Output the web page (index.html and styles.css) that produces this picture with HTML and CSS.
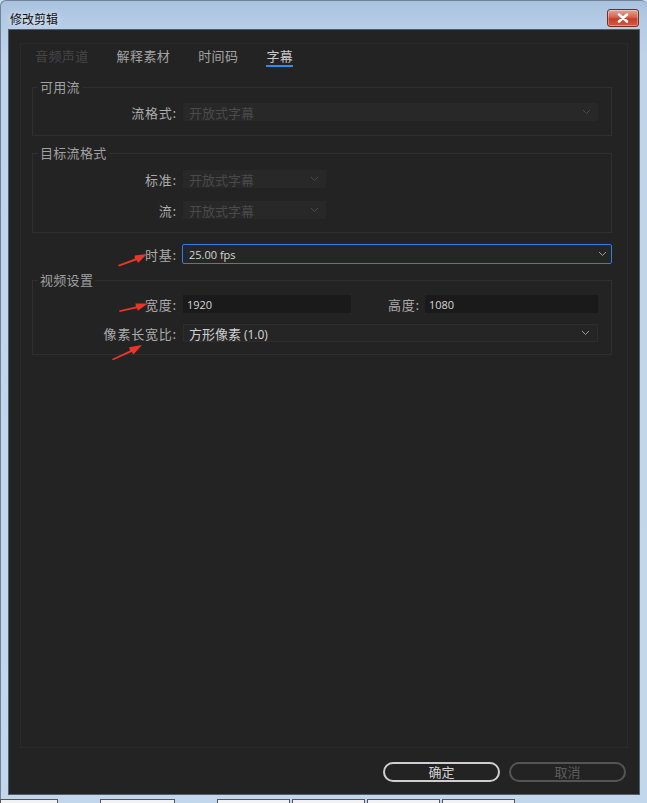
FILE: index.html
```html
<!DOCTYPE html>
<html lang="zh">
<head>
<meta charset="utf-8">
<title>修改剪辑</title>
<link rel="stylesheet" href="styles.css">
</head>
<body>
<div class="window">
  <div class="titlebar">
    <span class="title">修改剪辑</span>
    <span class="close"><svg width="14" height="10" viewBox="0 0 14 10"><path d="M3 1.5l8 7M11 1.5l-8 7" stroke="#fff" stroke-width="2.6" stroke-linecap="round"/></svg></span>
  </div>
  <div class="client">
    <div class="panel">
      <div class="tabs">
        <span class="tab disabled">音频声道</span>
        <span class="tab">解释素材</span>
        <span class="tab">时间码</span>
        <span class="tab active">字幕</span>
      </div>

      <fieldset class="group g1">
        <legend>可用流</legend>
        <div class="row">
          <label class="lbl">流格式:</label>
          <div class="select disabled wide"><span>开放式字幕</span><svg class="chev" width="9" height="6" viewBox="0 0 9 6"><path d="M1 1l3.5 3.5L8 1" fill="none" stroke="#4a4a4a"/></svg></div>
        </div>
      </fieldset>

      <fieldset class="group g2">
        <legend>目标流格式</legend>
        <div class="row">
          <label class="lbl">标准:</label>
          <div class="select disabled short"><span>开放式字幕</span><svg class="chev" width="9" height="6" viewBox="0 0 9 6"><path d="M1 1l3.5 3.5L8 1" fill="none" stroke="#4a4a4a"/></svg></div>
        </div>
        <div class="row gap13">
          <label class="lbl">流:</label>
          <div class="select disabled short"><span>开放式字幕</span><svg class="chev" width="9" height="6" viewBox="0 0 9 6"><path d="M1 1l3.5 3.5L8 1" fill="none" stroke="#4a4a4a"/></svg></div>
        </div>
      </fieldset>

      <div class="row timebase">
        <label class="lbl lbl-wide">时基:</label>
        <div class="select focus"><span class="latin">25.00 fps</span><svg class="chev" width="9" height="6" viewBox="0 0 9 6"><path d="M1 1l3.5 3.5L8 1" fill="none" stroke="#9a9a9a"/></svg></div>
      </div>

      <fieldset class="group g3">
        <legend>视频设置</legend>
        <div class="row">
          <label class="lbl">宽度:</label>
          <div class="input w1"><span class="latin">1920</span></div>
          <label class="lbl2">高度:</label>
          <div class="input w2"><span class="latin">1080</span></div>
        </div>
        <div class="row gap11">
          <label class="lbl">像素长宽比:</label>
          <div class="select plain wide"><span>方形像素 <span class="latin big">(1.0)</span></span><svg class="chev" width="9" height="6" viewBox="0 0 9 6"><path d="M1 1l3.5 3.5L8 1" fill="none" stroke="#9a9a9a"/></svg></div>
        </div>
      </fieldset>
    </div>

    <div class="footer">
      <button class="btn ok">确定</button>
      <button class="btn cancel">取消</button>
    </div>

    <svg class="arrow a1" width="32" height="16" viewBox="0 0 32 16"><polygon points="1,13 18,6.6 17.5,3.4 30,2 21,11 19.7,8.2 2,14.5" fill="#e8362a"/></svg>
    <svg class="arrow a2" width="32" height="12" viewBox="0 0 32 12"><polygon points="1,9.5 18,5.6 17.4,2.4 30,2.5 19.8,9.8 19,7.2 1.6,11" fill="#e8362a"/></svg>
    <svg class="arrow a3" width="34" height="18" viewBox="0 0 34 18"><polygon points="1,16 19,7.4 18,4.2 31,2 22.4,11.6 20.7,8.9 2,17.2" fill="#e8362a"/></svg>
  </div>
  <div class="strip">
    <span class="seg s1"></span><span class="seg s2"></span><span class="seg s3"></span><span class="seg s4"></span><span class="seg s5"></span><span class="seg s6"></span>
  </div>
</div>
</body>
</html>
```
FILE: styles.css
```css
* { box-sizing: border-box; }
html, body { margin: 0; padding: 0; }
body {
  width: 647px;
  height: 803px;
  overflow: hidden;
  background: #c9dbee;
  font-family: "Noto Sans CJK SC", "Noto Sans", sans-serif;
}
.window {
  width: 647px;
  height: 803px;
  background: linear-gradient(180deg, #a9c2de 0px, #b4cbe5 20px, #bfd4ea 60px, #c3d7ec 100%);
  border-left: 1px solid #6e8299;
  border-top: 1px solid #6e8299;
  border-radius: 6px 6px 0 0;
  padding: 0 7px 0 7px;
  display: flex;
  flex-direction: column;
}
.titlebar {
  height: 28px;
  display: flex;
  align-items: center;
  justify-content: space-between;
}
.title {
  font-size: 12px;
  color: #111;
  padding-left: 2px;
  margin-top: 6px;
  text-shadow: 0 0 6px rgba(255,255,255,0.9);
}
.close {
  width: 32px;
  height: 18px;
  margin-top: 6px;
  margin-right: 1px;
  border: 1px solid #7d2b21;
  border-radius: 3px;
  background: linear-gradient(180deg, #e6a497 0%, #d4634f 45%, #c2402b 55%, #d45a40 100%);
  display: flex;
  align-items: center;
  justify-content: center;
  box-shadow: inset 0 0 0 1px rgba(255,255,255,0.35);
}
.client {
  position: relative;
  height: 766px;
  background: #232323;
  border: 1px solid #4f5f72;
  padding: 13px 11px 12px 11px;
  display: flex;
  flex-direction: column;
}
.panel {
  height: 706px;
  border: 1px solid #2a2a2a;
  padding: 0 15px 0 0;
}
.tabs {
  display: flex;
  gap: 28px;
  padding-left: 14px;
  height: 23px;
}
.tab {
  font-size: 13px;
  line-height: 16px;
  padding-top: 4px;
  padding-bottom: 1px;
  color: #a3a3a3;
  border-bottom: 2px solid transparent;
  height: 23px;
  letter-spacing: 0.4px;
}
.tab.disabled { color: #464646; }
.tab.active { color: #cacaca; border-bottom-color: #2d8ceb; }

.group {
  margin: 0 0 0 11px;
  padding: 0 13px 0 0;
  border: 1px solid #2f2f2f;
  min-width: 0;
}
.group legend {
  font-size: 13px;
  line-height: 16px;
  color: #a0a0a0;
  padding: 0 2px;
  margin-left: 5px;
  letter-spacing: 0.3px;
}
.g1 { margin-top: 12px; padding-top: 8px; padding-bottom: 14px; }
.g2 { margin-top: 9px; padding-top: 9px; padding-bottom: 13px; }
.g3 { margin-top: 8px; padding-top: 7px; padding-bottom: 12px; }

.row {
  display: flex;
  align-items: center;
  height: 18px;
}
.gap13 { margin-top: 13px; }
.gap11 { margin-top: 11px; }
.lbl {
  width: 144px;
  flex: none;
  text-align: right;
  font-size: 13px;
  color: #acacac;
  margin-right: 6px;
  white-space: nowrap;
  letter-spacing: 0.8px;
}
.lbl-wide { width: 156px; margin-right: 5px; }
.lbl2 {
  width: 69px;
  flex: none;
  text-align: right;
  font-size: 13px;
  color: #acacac;
  margin-right: 5px;
  letter-spacing: 0.8px;
}
.timebase { margin-top: 11px; height: 20px; }

.select {
  height: 18px;
  display: flex;
  align-items: center;
  justify-content: space-between;
  padding: 0 7px 0 6px;
  font-size: 13px;
  color: #cfcfcf;
  background: #262626;
}
.select.wide { flex: 1; }
.select.short { width: 143px; flex: none; }
.select.disabled { background: #282828; color: #4a4a4a; }
.select.plain { background: #252525; border: 1px solid #2d2d2d; padding-left: 5px; }
.select.focus {
  flex: 1;
  height: 20px;
  border: 1px solid #2b7fe0;
  border-radius: 2px;
  padding: 0 4px 0 6px;
  background: #262626;
}
.latin { font-family: "Open Sans", "Noto Sans", sans-serif; font-size: 11px; color: #d6d6d6; }
.latin.big { font-size: 12px; }

.input {
  height: 18px;
  background: #1a1a1a;
  display: flex;
  align-items: center;
  padding-left: 4px;
}
.input.w1 { width: 168px; flex: none; }
.input.w2 { flex: 1; }

.footer {
  margin-top: 14px;
  display: flex;
  justify-content: flex-end;
  gap: 9px;
  padding-right: 2px;
}
.btn {
  width: 117px;
  height: 20px;
  border-radius: 10px;
  background: #232323;
  font-family: "Noto Sans CJK SC", sans-serif;
  font-size: 13px;
  line-height: 14px;
  padding: 0;
}
.btn.ok { border: 2px solid #cfcfcf; color: #d4d4d4; }
.btn.cancel { border: 2px solid #555; color: #5d5d5d; }

.arrow { position: absolute; }
.a1 { left: 108px; top: 222px; }
.a2 { left: 109px; top: 271px; }
.a3 { left: 102px; top: 313px; }

.strip {
  margin-top: 4px;
  height: 4px;
  display: flex;
  margin-left: -8px;
  margin-right: -7px;
}
.seg { height: 4px; background: #f2f2f2; border: 1px solid #555; border-bottom: none; }
.s1 { width: 58px; margin-left: 0; }
.s2 { width: 75px; margin-left: 42px; }
.s3 { width: 73px; margin-left: 42px; }
.s4 { width: 73px; margin-left: 2px; }
.s5 { width: 73px; margin-left: 2px; }
.s6 { width: 73px; margin-left: 2px; }
```
